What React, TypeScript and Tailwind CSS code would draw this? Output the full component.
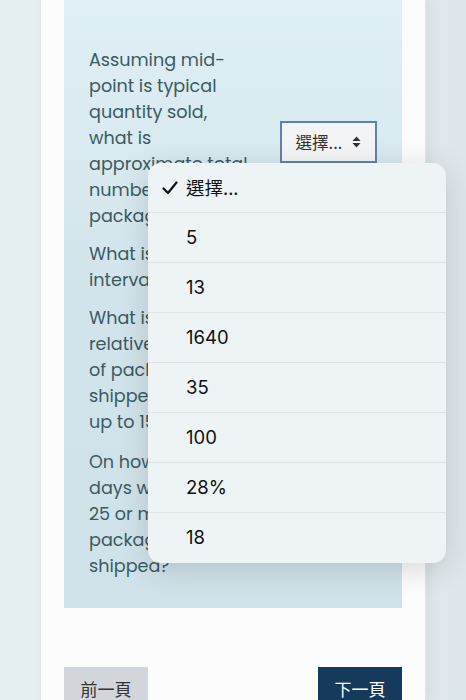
import React from "react";

const options = ["5", "13", "1640", "35", "100", "28%", "18"];

const textFont = { fontFamily: "Poppins, 'Open Sans', 'Noto Sans CJK TC', sans-serif" };

function Question({ lines }: { lines: string[] }) {
  return (
    <div className="w-[168px] whitespace-nowrap text-[17.6px] leading-[26px] text-[#3b5a62]" style={textFont}>
      {lines.map((l) => (
        <div key={l}>{l}</div>
      ))}
    </div>
  );
}

export default function App() {
  return (
    <div className="relative h-[700px] w-full overflow-hidden bg-gradient-to-r from-[#e3eef1] via-[#eef3f5] to-[#dde6ea]">
      <div className="ml-[40px] h-full w-[386px] border-x border-[#dfe5e8] bg-[#fcfcfd] px-[23px] shadow-[4px_0_12px_rgba(0,0,0,0.05)]">
        {/* question panel */}
        <div className="h-[608px] bg-gradient-to-b from-[#dfeff5] via-[#d2e4eb] to-[#d0e2e9] pl-[25px] pr-[25px] pt-[47px]">
          <div className="flex items-center justify-between">
            <Question
              lines={["Assuming mid-", "point is typical", "quantity sold,", "what is", "approximate total", "number of", "packages?"]}
            />
            <div
              className="mt-[8px] flex h-[42px] w-[97px] items-center justify-center gap-[10px] border-2 border-[#5f83a8] bg-[#f3f4f5] text-[16.5px] text-[#333]"
              style={{ fontFamily: "'Noto Sans CJK TC', sans-serif" }}
            >
              <span>選擇...</span>
              <svg width="9" height="12" viewBox="0 0 9 12" fill="#333">
                <path d="M4.5 0.5 L8.5 5 H0.5 Z" />
                <path d="M4.5 11.5 L8.5 7 H0.5 Z" />
              </svg>
            </div>
          </div>
          <div className="mt-[12px]">
            <Question lines={["What is the", "interval?"]} />
          </div>
          <div className="mt-[12px]">
            <Question lines={["What is the", "relative frequency", "of packages", "shipped with", "up to 15?"]} />
          </div>
          <div className="mt-[14px]">
            <Question lines={["On how many", "days were", "25 or more", "packages", "shipped?"]} />
          </div>
        </div>

        {/* nav buttons */}
        <div className="mt-[59px] flex justify-between" style={{ fontFamily: "'Noto Sans CJK TC', sans-serif" }}>
          <button className="h-[40px] w-[84px] bg-[#d2d6da] pt-[3px] text-[17px] text-[#333]">前一頁</button>
          <button className="h-[40px] w-[84px] bg-[#163a5c] pt-[3px] text-[17px] text-white">下一頁</button>
        </div>
      </div>

      {/* open select menu */}
      <div
        className="absolute left-[148px] top-[163px] w-[298px] overflow-hidden rounded-[13px] bg-[#eef4f6] text-[18.5px] text-[#111] shadow-[0_6px_30px_rgba(0,0,0,0.15)]"
        style={{ fontFamily: "Inter, 'Noto Sans CJK TC', sans-serif" }}
      >
        <div className="flex h-[50px] items-center border-b border-[#dde3e6] pl-[14px]">
          <svg width="16" height="14" viewBox="0 0 16 14" className="mr-[8px]">
            <path d="M1.5 7.5 L6 12 L14.5 1.5" fill="none" stroke="#111" strokeWidth="2.2" strokeLinecap="round" strokeLinejoin="round" />
          </svg>
          <span style={{ fontFamily: "'Noto Sans CJK TC', sans-serif" }}>選擇...</span>
        </div>
        {options.map((o, i) => (
          <div
            key={o}
            className={
              i < options.length - 1
                ? "flex h-[50px] items-center border-b border-[#dde3e6] pl-[38px]"
                : "flex h-[50px] items-center pl-[38px]"
            }
          >
            {o}
          </div>
        ))}
      </div>
    </div>
  );
}
